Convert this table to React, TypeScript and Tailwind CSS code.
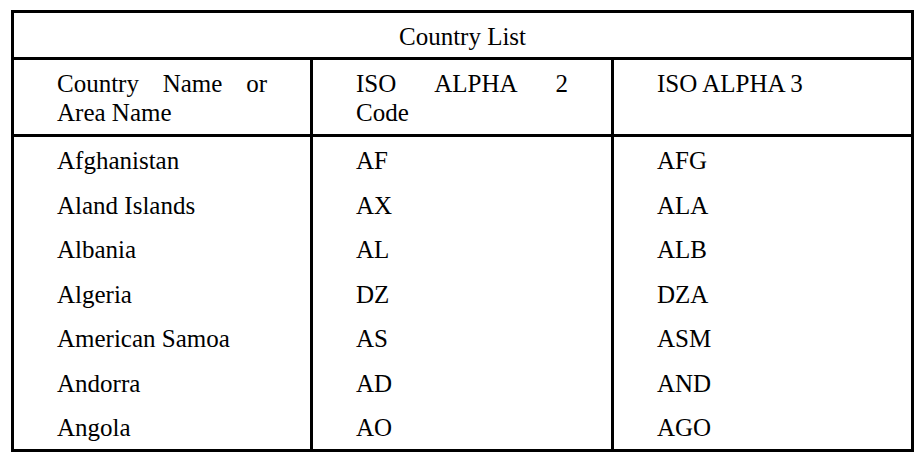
import * as React from 'react';

type Country = { name: string; alpha2: string; alpha3: string };

const countries: Country[] = [
  { name: 'Afghanistan', alpha2: 'AF', alpha3: 'AFG' },
  { name: 'Aland Islands', alpha2: 'AX', alpha3: 'ALA' },
  { name: 'Albania', alpha2: 'AL', alpha3: 'ALB' },
  { name: 'Algeria', alpha2: 'DZ', alpha3: 'DZA' },
  { name: 'American Samoa', alpha2: 'AS', alpha3: 'ASM' },
  { name: 'Andorra', alpha2: 'AD', alpha3: 'AND' },
  { name: 'Angola', alpha2: 'AO', alpha3: 'AGO' },
];

// header cells: first line justified to the column, like a LaTeX p{} column
function HeaderCell({ lines, divider }: { lines: string[]; divider?: boolean }) {
  return (
    <div
      className={`pl-[43px] pr-[43px] pt-[9px] pb-[7px] ${
        divider ? 'border-r-[3px] border-black' : ''
      }`}
    >
      {lines.map((line, i) => (
        <div
          key={i}
          className={i < lines.length - 1 ? 'text-justify [text-align-last:justify]' : ''}
        >
          {line}
        </div>
      ))}
    </div>
  );
}

function DataCell({ children, divider }: { children: React.ReactNode; divider?: boolean }) {
  return (
    <div
      className={`h-[44.57px] pl-[43px] pr-[43px] pt-[9px] whitespace-nowrap ${
        divider ? 'border-r-[3px] border-black' : ''
      }`}
    >
      {children}
    </div>
  );
}

export default function App() {
  return (
    <div
      className="w-[924px] h-[460px] bg-white text-black pt-[10px] pl-[11px] text-[25px] leading-[29px]"
      style={{ fontFamily: '"Liberation Serif", "DejaVu Serif", serif' }}
    >
      <div className="w-[903px] border-[3px] border-black">
        {/* title row */}
        <div className="h-[47px] pt-[9px] text-center border-b-[3px] border-black">
          Country List
        </div>

        {/* column headers */}
        <div className="grid grid-cols-[299px_301px_297px] border-b-[3px] border-black">
          <HeaderCell lines={['Country Name or', 'Area Name']} divider />
          <HeaderCell lines={['ISO ALPHA 2', 'Code']} divider />
          <HeaderCell lines={['ISO ALPHA 3']} />
        </div>

        {/* body */}
        <div className="grid grid-cols-[299px_301px_297px]">
          {countries.map((c) => (
            <React.Fragment key={c.alpha3}>
              <DataCell divider>{c.name}</DataCell>
              <DataCell divider>{c.alpha2}</DataCell>
              <DataCell>{c.alpha3}</DataCell>
            </React.Fragment>
          ))}
        </div>
      </div>
    </div>
  );
}
